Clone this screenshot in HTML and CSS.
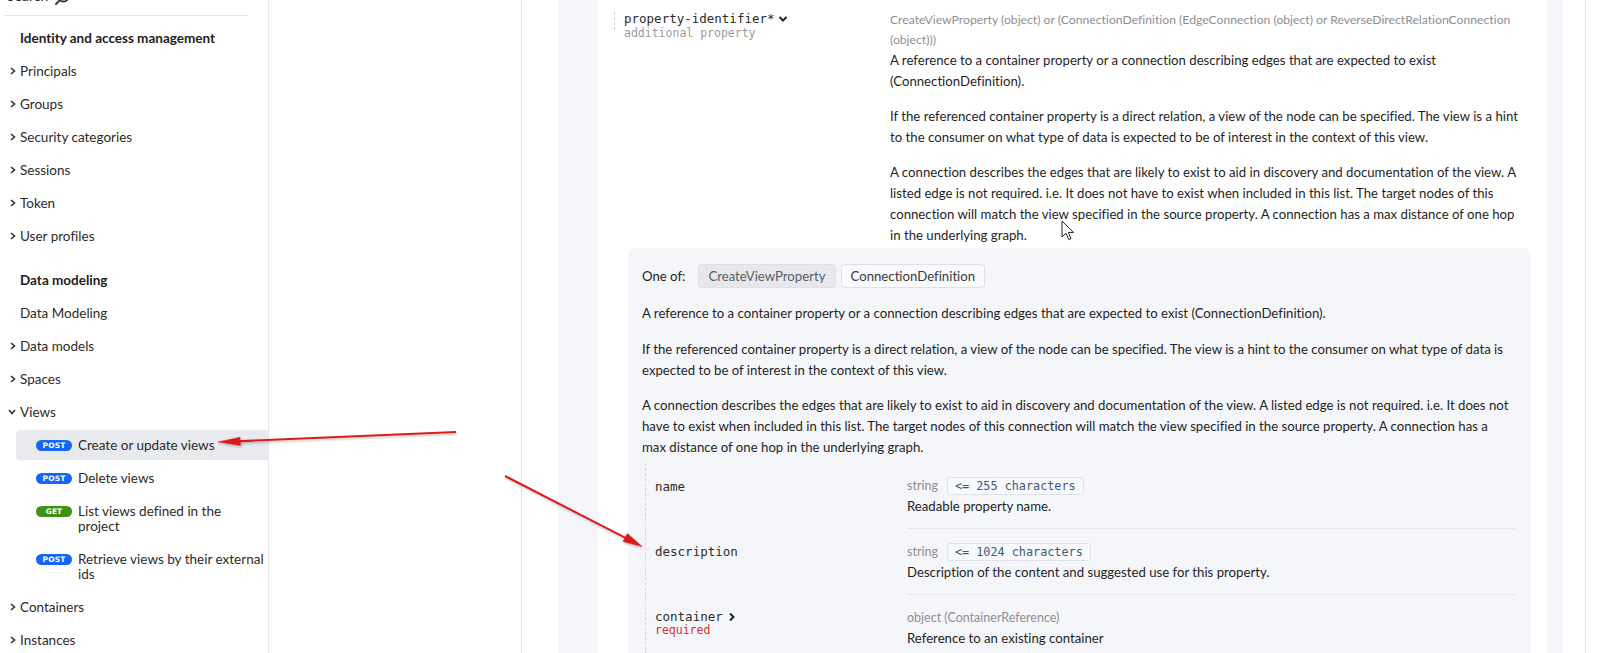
FILE: index.html
```html
<!DOCTYPE html>
<html lang="en">
<head>
<meta charset="utf-8">
<title>Create or update views</title>
<link rel="stylesheet" href="styles.css">
</head>
<body>
<div class="app">
  <aside class="sidebar">
    <div class="search">
      <span>Search</span>
      <svg class="search-icon" width="16" height="16" viewBox="0 0 16 16"><circle cx="9.5" cy="6.5" r="5" fill="none" stroke="#333" stroke-width="1.8"/><line x1="6" y1="10" x2="2" y2="14" stroke="#333" stroke-width="1.8" stroke-linecap="round"/></svg>
    </div>
    <nav class="nav">
      <div class="nav-title">Identity and access management</div>
      <div class="nav-item"><span class="chev-slot"><svg class="chev" width="6" height="8" viewBox="0 0 6 8"><polyline points="1,1 4.5,4 1,7" fill="none" stroke="#333" stroke-width="1.6"/></svg></span><span>Principals</span></div>
      <div class="nav-item"><span class="chev-slot"><svg class="chev" width="6" height="8" viewBox="0 0 6 8"><polyline points="1,1 4.5,4 1,7" fill="none" stroke="#333" stroke-width="1.6"/></svg></span><span>Groups</span></div>
      <div class="nav-item"><span class="chev-slot"><svg class="chev" width="6" height="8" viewBox="0 0 6 8"><polyline points="1,1 4.5,4 1,7" fill="none" stroke="#333" stroke-width="1.6"/></svg></span><span>Security categories</span></div>
      <div class="nav-item"><span class="chev-slot"><svg class="chev" width="6" height="8" viewBox="0 0 6 8"><polyline points="1,1 4.5,4 1,7" fill="none" stroke="#333" stroke-width="1.6"/></svg></span><span>Sessions</span></div>
      <div class="nav-item"><span class="chev-slot"><svg class="chev" width="6" height="8" viewBox="0 0 6 8"><polyline points="1,1 4.5,4 1,7" fill="none" stroke="#333" stroke-width="1.6"/></svg></span><span>Token</span></div>
      <div class="nav-item"><span class="chev-slot"><svg class="chev" width="6" height="8" viewBox="0 0 6 8"><polyline points="1,1 4.5,4 1,7" fill="none" stroke="#333" stroke-width="1.6"/></svg></span><span>User profiles</span></div>

      <div class="nav-title group">Data modeling</div>
      <div class="nav-item"><span class="chev-slot"></span><span>Data Modeling</span></div>
      <div class="nav-item"><span class="chev-slot"><svg class="chev" width="6" height="8" viewBox="0 0 6 8"><polyline points="1,1 4.5,4 1,7" fill="none" stroke="#333" stroke-width="1.6"/></svg></span><span>Data models</span></div>
      <div class="nav-item"><span class="chev-slot"><svg class="chev" width="6" height="8" viewBox="0 0 6 8"><polyline points="1,1 4.5,4 1,7" fill="none" stroke="#333" stroke-width="1.6"/></svg></span><span>Spaces</span></div>
      <div class="nav-item"><span class="chev-slot"><svg class="chev-down" width="8" height="6" viewBox="0 0 8 6"><polyline points="1,1 4,4.5 7,1" fill="none" stroke="#333" stroke-width="1.6"/></svg></span><span>Views</span></div>
      <div class="op active"><span class="badge post">POST</span><span class="op-text">Create or update views</span></div>
      <div class="op"><span class="badge post">POST</span><span class="op-text">Delete views</span></div>
      <div class="op"><span class="badge get">GET</span><span class="op-text">List views defined in the project</span></div>
      <div class="op"><span class="badge post">POST</span><span class="op-text">Retrieve views by their external ids</span></div>
      <div class="nav-item"><span class="chev-slot"><svg class="chev" width="6" height="8" viewBox="0 0 6 8"><polyline points="1,1 4.5,4 1,7" fill="none" stroke="#333" stroke-width="1.6"/></svg></span><span>Containers</span></div>
      <div class="nav-item"><span class="chev-slot"><svg class="chev" width="6" height="8" viewBox="0 0 6 8"><polyline points="1,1 4.5,4 1,7" fill="none" stroke="#333" stroke-width="1.6"/></svg></span><span>Instances</span></div>
    </nav>
  </aside>

  <div class="gutter"></div>

  <main class="content">
    <div class="panel">
      <div class="card">
        <div class="prop-row">
          <div class="prop-name">
            <div class="pname-line"><span class="mono">property-identifier*</span><svg class="caret-down" width="10" height="8" viewBox="0 0 10 8"><polyline points="1.5,2 5,5.5 8.5,2" fill="none" stroke="#222" stroke-width="2"/></svg></div>
            <div class="pname-sub">additional property</div>
          </div>
          <div class="prop-desc">
            <div class="type-line">CreateViewProperty (object) or (ConnectionDefinition (EdgeConnection (object) or ReverseDirectRelationConnection (object)))</div>
            <p class="first">A reference to a container property or a connection describing edges that are expected to exist (ConnectionDefinition).</p>
            <p>If the referenced container property is a direct relation, a view of the node can be specified. The view is a hint to the consumer on what type of data is expected to be of interest in the context of this view.</p>
            <p class="last">A connection describes the edges that are likely to exist to aid in discovery and documentation of the view. A listed edge is not required. i.e. It does not have to exist when included in this list. The target nodes of this connection will match the view specified in the source property. A connection has a max distance of one hop in the underlying graph.</p>
          </div>
        </div>

        <div class="oneof">
          <div class="oneof-head">
            <span class="oneof-label">One of:</span>
            <span class="tab selected">CreateViewProperty</span>
            <span class="tab">ConnectionDefinition</span>
          </div>
          <p>A reference to a container property or a connection describing edges that are expected to exist (ConnectionDefinition).</p>
          <p>If the referenced container property is a direct relation, a view of the node can be specified. The view is a hint to the consumer on what type of data is expected to be of interest in the context of this view.</p>
          <p class="last">A connection describes the edges that are likely to exist to aid in discovery and documentation of the view. A listed edge is not required. i.e. It does not have to exist when included in this list. The target nodes of this connection will match the view specified in the source property. A connection has a max distance of one hop in the underlying graph.</p>

          <div class="fields">
            <div class="field">
              <div class="field-name"><span class="mono">name</span></div>
              <div class="field-info">
                <div class="field-type"><span class="type">string</span><span class="constraint">&lt;= 255 characters</span></div>
                <div class="field-desc">Readable property name.</div>
              </div>
            </div>
            <div class="field">
              <div class="field-name"><span class="mono">description</span></div>
              <div class="field-info">
                <div class="field-type"><span class="type">string</span><span class="constraint">&lt;= 1024 characters</span></div>
                <div class="field-desc">Description of the content and suggested use for this property.</div>
              </div>
            </div>
            <div class="field">
              <div class="field-name">
                <div class="fname-line"><span class="mono">container</span><svg class="caret-right" width="8" height="10" viewBox="0 0 8 10"><polyline points="2,1.5 5.5,5 2,8.5" fill="none" stroke="#222" stroke-width="2"/></svg></div>
                <div class="required">required</div>
              </div>
              <div class="field-info">
                <div class="field-type"><span class="type">object (ContainerReference)</span></div>
                <div class="field-desc">Reference to an existing container</div>
              </div>
            </div>
          </div>
        </div>
      </div>
    </div>
  </main>

  <div class="rightpane"></div>
</div>

<svg class="annot" width="1610" height="653" viewBox="0 0 1610 653">
  <defs>
    <filter id="sh" x="-10%" y="-50%" width="120%" height="200%">
      <feDropShadow dx="1" dy="1.5" stdDeviation="1" flood-color="#000" flood-opacity="0.25"/>
    </filter>
  </defs>
  <g filter="url(#sh)" fill="#d81e1e" stroke="#d81e1e">
    <line x1="456" y1="432" x2="236" y2="441.3" stroke-width="2.2"/>
    <polygon points="218,442 240,437.2 240.4,445.4" stroke-width="0.5"/>
    <line x1="505" y1="476" x2="626" y2="538.2" stroke-width="2"/>
    <polygon points="642,546.5 623,541.6 627.4,533.4" stroke-width="0.5"/>
  </g>
  <path d="M1062 221 L1062 237 L1066 233.2 L1068.8 239.6 L1071 238.6 L1068.3 232.4 L1073.5 232.4 Z" fill="#fff" stroke="#222" stroke-width="1" stroke-linejoin="round"/>
</svg>
</body>
</html>
```

FILE: styles.css
```css
* {
  box-sizing: border-box;
}

html, body {
  margin: 0;
  padding: 0;
  background: #ffffff;
}

body {
  font-family: Lato, "Open Sans", sans-serif;
  font-size: 13.2px;
  font-variant-ligatures: none;
  color: #1f1f1f;
  width: 1610px;
  height: 653px;
  overflow: hidden;
  position: relative;
}

.app {
  display: flex;
  height: 653px;
  overflow: hidden;
}

/* ---------- sidebar ---------- */
.sidebar {
  width: 269px;
  flex: none;
  border-right: 1px solid #e6e7ea;
  color: #2b2b2b;
  font-size: 13.5px;
}

.search {
  margin: -14px 0 0 4px;
  width: 244px;
  height: 30px;
  padding: 0 0 0 3px;
  line-height: 20px;
  border-bottom: 1px solid #e3e4e7;
  display: flex;
  align-items: flex-start;
  gap: 6px;
  font-size: 14px;
}

.search-icon {
  margin-top: 4px;
}

.nav {
  padding-top: 7px;
}

.nav-title {
  padding: 7.5px 0 7.5px 20px;
  line-height: 15px;
  margin-bottom: 3px;
  font-weight: 700;
  color: #222;
}

.nav-title.group {
  margin-top: 14px;
}

.nav-item {
  display: flex;
  align-items: center;
  padding: 7.5px 0;
  line-height: 15px;
  margin-bottom: 3px;
}

.chev-slot {
  width: 20px;
  flex: none;
  display: flex;
  align-items: center;
  height: 15px;
}

.chev {
  margin-left: 9.5px;
}

.chev-down {
  margin-left: 8px;
}

.op {
  display: flex;
  align-items: flex-start;
  margin-left: 16px;
  padding: 7.5px 4px 7.5px 20px;
  line-height: 15px;
  margin-bottom: 3px;
  border-radius: 4px 0 0 4px;
}

.op.active {
  background: #e9eaee;
}

.badge {
  flex: 0 0 36px;
  width: 36px;
  min-width: 36px;
  height: 11px;
  margin-top: 2px;
  margin-right: 6px;
  border-radius: 6px;
  color: #fff;
  font-family: "DejaVu Sans", sans-serif;
  font-weight: 700;
  font-size: 7.5px;
  line-height: 11px;
  text-align: center;
  letter-spacing: 0.1px;
}

.badge.post {
  background: #1466f5;
}

.badge.get {
  background: #3f9314;
}

/* ---------- main ---------- */
.gutter {
  width: 253px;
  flex: none;
  border-right: 1px solid #e6e7ea;
}

.content {
  width: 1064px;
  flex: none;
  padding: 0 22px 0 36px;
  border-right: 1px solid #e6e7ea;
}

.panel {
  background: #f5f6fa;
  height: 100%;
  padding: 0 16px 0 40px;
}

.card {
  background: #ffffff;
  height: 100%;
  padding: 10px 16px 0 16px;
}

.rightpane {
  flex: 1;
}

.mono {
  font-family: "DejaVu Sans Mono", "Liberation Mono", monospace;
  font-size: 12.5px;
  color: #2d2d2d;
}

.prop-row {
  display: flex;
}

.prop-name {
  width: 276px;
  flex: none;
  padding: 2px 0 0 10px;
  background: repeating-linear-gradient(to bottom, #cfd2d8 0 3px, transparent 3px 5px) no-repeat 0 2px / 1px 18px;
}

.pname-line {
  display: flex;
  align-items: center;
  line-height: 14px;
  height: 14px;
  gap: 3px;
}

.pname-sub {
  font-family: "DejaVu Sans Mono", "Liberation Mono", monospace;
  font-size: 11.5px;
  line-height: 14px;
  color: #9a9ca2;
}

.prop-desc {
  width: 633px;
  flex: none;
}

.type-line {
  color: #8d8f94;
  font-size: 12.2px;
  line-height: 19.5px;
}

.prop-desc p {
  margin: 0 0 14px 0;
  line-height: 21px;
}

.prop-desc p.first {
  margin-top: 1px;
}

.prop-desc p.last {
  margin-bottom: 0;
}

/* one of box */
.oneof {
  margin: 2px 0 0 14px;
  background: #f5f6fa;
  border-radius: 8px 8px 0 0;
  padding: 16px 16px 0 14px;
  height: 500px;
}

.oneof-head {
  display: flex;
  align-items: center;
  height: 24px;
  margin-bottom: 15px;
}

.oneof-label {
  margin-right: 13px;
}

.tab {
  height: 24px;
  line-height: 22px;
  padding: 0 9px;
  border: 1px solid #dfe1e6;
  border-radius: 4px;
  margin-right: 5px;
  background: #f9fafc;
  color: #3a3a3a;
}

.tab.selected {
  background: #e6e8ed;
  color: #5b5d63;
}

.oneof p {
  margin: 0 0 14.5px 0;
  line-height: 21px;
}

.oneof p.last {
  margin-bottom: 0;
}

.fields {
  margin: 5px 0 0 3px;
  border-left: 1px dashed #d2d5db;
}

.field {
  display: flex;
}

.field-name {
  width: 261px;
  flex: none;
  padding: 15.5px 0 0 9px;
  line-height: 14px;
}

.fname-line {
  display: flex;
  align-items: center;
  gap: 5px;
  height: 14px;
}

.required {
  font-family: "DejaVu Sans Mono", "Liberation Mono", monospace;
  font-size: 11.5px;
  line-height: 12px;
  color: #d7302b;
}

.field-info {
  flex: 1;
  padding: 11.5px 0 13.5px 0;
  border-top: 1px solid #e3e5ea;
}

.field:first-child .field-info {
  border-top: 0;
}

.field-type {
  display: flex;
  align-items: center;
  height: 22px;
  gap: 9px;
}

.type {
  color: #8d8f94;
  font-size: 12.5px;
  flex: none;
}

.constraint {
  flex: none;
  font-family: "DejaVu Sans Mono", "Liberation Mono", monospace;
  font-size: 11.8px;
  color: #3b5a82;
  height: 18px;
  line-height: 16px;
  padding: 0 7px;
  border: 1px solid #dfe2e8;
  border-radius: 3px;
  background: #f8f9fb;
  white-space: nowrap;
}

.field-desc {
  line-height: 18px;
}

/* annotation overlay (red arrows + pointer) */
.annot {
  position: absolute;
  left: 0;
  top: 0;
  pointer-events: none;
}
```
